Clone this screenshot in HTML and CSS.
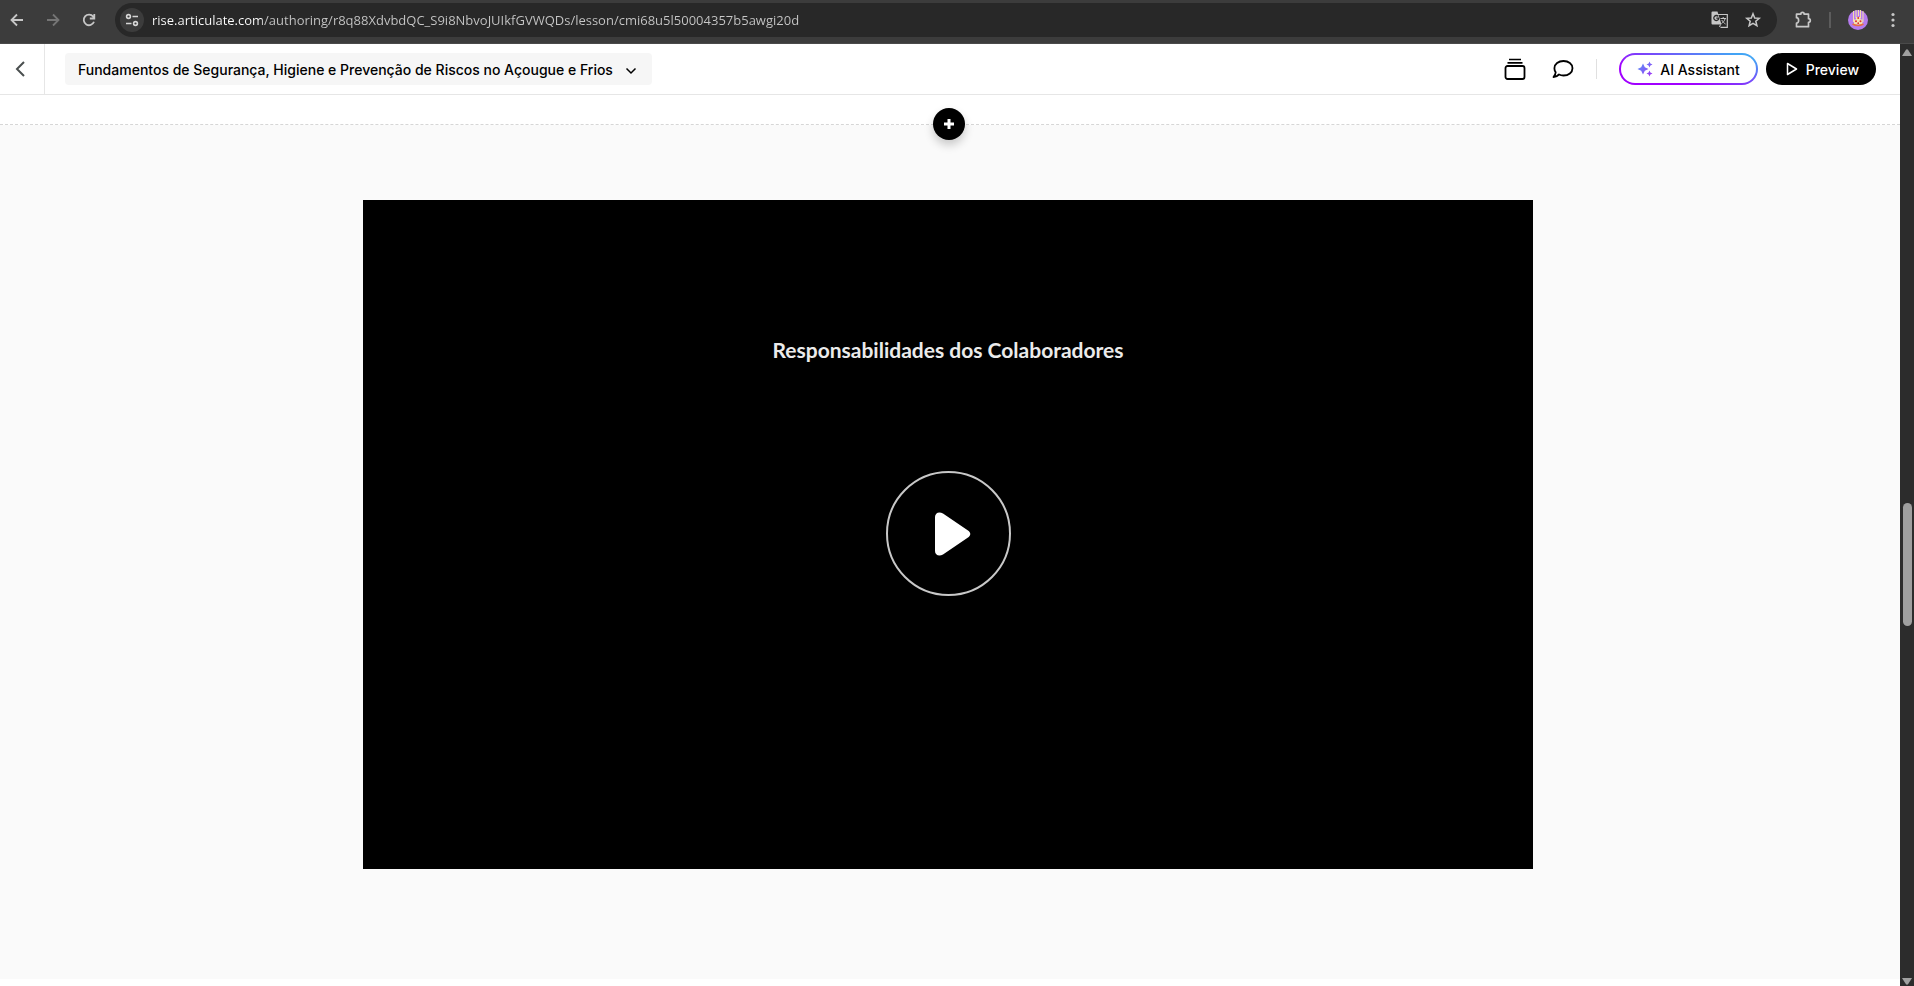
FILE: index.html
```html
<!DOCTYPE html>
<html lang="pt-BR">
<head>
  <meta charset="UTF-8">
  <meta name="viewport" content="width=device-width, initial-scale=1.0">
  <title>Fundamentos de Segurança</title>
  <link rel="stylesheet" href="styles.css">
</head>
<body>
  <!-- browser toolbar -->
  <div class="browser-bar">
    <div class="browser-nav">
      <button class="icon-btn" aria-label="Back">
        <svg width="16" height="16" viewBox="0 0 16 16" fill="none" stroke="#c7c7c7" stroke-width="1.800"><path d="M14 8H3M8 2.500L2.500 8L8 13.500"/></svg>
      </button>
      <button class="icon-btn" aria-label="Forward" disabled>
        <svg width="16" height="16" viewBox="0 0 16 16" fill="none" stroke="#757575" stroke-width="1.800"><path d="M2 8H13M8 2.500L13.500 8L8 13.500"/></svg>
      </button>
      <button class="icon-btn" aria-label="Reload">
        <svg width="16" height="16" viewBox="0 0 16 16" fill="none" stroke="#c7c7c7" stroke-width="1.800"><path d="M13 9.800A5.300 5.300 0 1 1 12.200 4.600L13.300 6M13.300 2V6.500H8.800"/></svg>
      </button>
    </div>
    <form class="url-bar">
      <button type="button" class="site-info" aria-label="Site information">
        <svg width="14" height="14" viewBox="0 0 14 14" fill="none" stroke="#d6d6d6" stroke-width="1.600"><circle cx="3.500" cy="3.500" r="1.900"/><path d="M7.500 3.500H13M1 10.500H6.500"/><circle cx="10.500" cy="10.500" r="1.900"/></svg>
      </button>
      <input type="text" class="url-input" aria-label="Address" spellcheck="false" value="rise.articulate.com/authoring/r8q88XdvbdQC_S9i8NbvoJUIkfGVWQDs/lesson/cmi68u5l50004357b5awgi20d">
      <button type="button" class="icon-btn" aria-label="Translate">
        <svg width="18" height="18" viewBox="0 0 18 18" fill="none"><path d="M7 3.500H16.300V16.300H9.500" stroke="#c7c7c7" stroke-width="1.200"/><path d="M1.500 0.500H6.500L10.500 13.500H1.500A1 1 0 0 1 .5 12.500V1.500A1 1 0 0 1 1.500 .5Z" fill="#c7c7c7"/><path d="M7.200 5.400A2.500 2.500 0 1 0 7.500 8.200V7.200H5.300" stroke="#292929" stroke-width="1.300"/><path d="M9.500 7.500H15M12.200 6V7.500M14.200 7.500C13.500 10 12 11.500 10.500 12.500M10.800 9C11.800 11 13 12 14.500 13M9.500 13.500L8.500 16" stroke="#c7c7c7"/></svg>
      </button>
      <button type="button" class="icon-btn" aria-label="Bookmark">
        <svg width="16" height="16" viewBox="0 0 16 16" fill="none" stroke="#c7c7c7" stroke-width="1.500"><path d="M8 1.800L9.700 6L14.200 6.300L10.800 9.200L11.900 13.700L8 11.300L4.100 13.700L5.200 9.200L1.800 6.300L6.300 6Z"/></svg>
      </button>
    </form>
    <div class="browser-tools">
      <button class="icon-btn" aria-label="Extensions">
        <svg width="18" height="18" viewBox="0 0 18 18" fill="none" stroke="#c7c7c7" stroke-width="1.700" stroke-linejoin="round"><path d="M2.500 3.200H6.800C6.800 .8 10.200 .8 10.200 3.200H14.500V7.700C16.900 7.700 16.900 11.300 14.500 11.300V15.700H2.500V12.200C5.300 12.200 5.300 6.700 2.500 6.700Z"/></svg>
      </button>
      <span class="tools-divider"></span>
      <button class="icon-btn" aria-label="Profile">
        <svg width="20" height="20" viewBox="0 0 20 20"><circle cx="10" cy="10" r="10" fill="#b57bee"/><path d="M5.500 1V12M8 0V8M10.500 0V6M12.500 0V8M15 1V12" stroke="#f3dfa8" stroke-width="1"/><path d="M8 7H12.500V9.500H14.500V14.500H6V9.500H8Z" fill="#f5e3b3"/><path d="M4.500 14Q10 17 15.500 14" stroke="#e8703f" stroke-width="1.500" fill="none"/><g fill="#e02b2b"><circle cx="10.200" cy="8" r=".9"/><circle cx="8" cy="11.300" r="1"/><circle cx="12.500" cy="11.300" r="1"/><circle cx="10.200" cy="13.200" r=".9"/></g></svg>
      </button>
      <button class="icon-btn" aria-label="Menu">
        <svg width="16" height="16" viewBox="0 0 16 16" fill="#c7c7c7"><circle cx="8" cy="2.500" r="1.600"/><circle cx="8" cy="8" r="1.600"/><circle cx="8" cy="13.500" r="1.600"/></svg>
      </button>
    </div>
  </div>

  <div class="window">
    <div class="page">
      <!-- course header -->
      <header class="header">
        <button class="back-btn" aria-label="Voltar">
          <svg width="12" height="18" viewBox="0 0 12 18" fill="none" stroke="#4a4f4f" stroke-width="2"><path d="M10 2L3 9L10 16"/></svg>
        </button>
        <div class="course-menu">
          <select class="course-select" aria-label="Curso">
            <option>Fundamentos de Segurança, Higiene e Prevenção de Riscos no Açougue e Frios</option>
          </select>
          <svg class="course-arrow" width="12" height="8" viewBox="0 0 12 8" fill="none" stroke="#000" stroke-width="1.500"><path d="M1.500 1.500L6 6L10.500 1.500"/></svg>
        </div>
        <div class="header-actions">
          <div class="header-icons">
            <button class="icon-btn" aria-label="Blocks">
              <svg width="22" height="22" viewBox="0 0 22 22" fill="none" stroke="#000" stroke-width="1.800"><rect x="1.500" y="8" width="19" height="13" rx="2"/><path d="M3.500 4.800H18.500M5 1.500H17" stroke-width="1.700"/></svg>
            </button>
            <button class="icon-btn" aria-label="Comments">
              <svg width="22" height="20" viewBox="0 0 22 20" fill="none" stroke="#000" stroke-width="1.800" stroke-linejoin="round"><path d="M11.500 2C16.500 2 20.500 5 20.500 9.200C20.500 13.500 16.500 16.500 11.500 16.500C9.900 16.500 8.400 16.200 7 15.500C5.500 17 3.500 18 1.500 18C2.700 16.700 3.600 15 3.700 13.300C2.900 12.200 2.400 10.800 2.400 9.200C2.400 5 6.500 2 11.500 2Z"/></svg>
            </button>
          </div>
          <span class="header-divider"></span>
          <div class="header-buttons">
            <button class="pill assistant-btn">
              <svg width="14" height="14" viewBox="0 0 14 14"><defs><linearGradient id="spark" x1="0" y1="0" x2="1" y2="1"><stop offset="0" stop-color="#4f9cf7"/><stop offset="1" stop-color="#a42cf5"/></linearGradient></defs><path fill="url(#spark)" d="M5 1.500L6.800 5.200L10.500 7L6.800 8.800L5 12.500L3.200 8.800L-.5 7L3.200 5.200ZM11.500 -.5L12.400 1.600L14.500 2.500L12.400 3.400L11.500 5.500L10.600 3.400L8.500 2.500L10.600 1.600ZM11.500 8.500L12.400 10.600L14.500 11.500L12.400 12.400L11.500 14.500L10.600 12.400L8.500 11.500L10.600 10.600Z"/></svg>
              AI Assistant
            </button>
            <button class="pill preview-btn">
              <svg width="12" height="14" viewBox="0 0 12 14" fill="none" stroke="#fff" stroke-width="1.500" stroke-linejoin="round"><path d="M1.500 1.500L10.500 7L1.500 12.500Z"/></svg>
              Preview
            </button>
          </div>
        </div>
      </header>

      <!-- insert block line -->
      <div class="insert-row">
        <button class="insert-btn" aria-label="Adicionar bloco">
          <svg width="10" height="10" viewBox="0 0 10 10" stroke="#fff" stroke-width="3"><path d="M5 0V10M0 5H10"/></svg>
        </button>
      </div>

      <main class="block">
        <div class="video">
          <h1 class="video-title">Responsabilidades dos Colaboradores</h1>
          <button class="play-btn" aria-label="Play">
            <svg width="36" height="44" viewBox="0 0 36 44" fill="#fff"><path d="M0 5C0 1 4 -1 8 1.500L33 18.500C36 20.500 36 23.500 33 25.500L8 42.500C4 45 0 43 0 39Z"/></svg>
          </button>
        </div>
      </main>
    </div>

    <div class="scrollbar">
      <svg width="10" height="8" viewBox="0 0 10 8" fill="#a0a0a0"><path d="M0 7L3.800 1Q5 -.5 6.200 1L10 7Z"/></svg>
      <div class="scroll-track">
        <div class="scroll-thumb"></div>
      </div>
      <svg width="10" height="8" viewBox="0 0 10 8" fill="#a0a0a0"><path d="M0 1L3.800 7Q5 8.500 6.200 7L10 1Z"/></svg>
    </div>
  </div>
</body>
</html>
```

FILE: styles.css
```css
* {
  box-sizing: border-box;
}
body {
  margin: 0;
  height: 100vh;
  display: flex;
  flex-direction: column;
  background-color: #fff;
  font-family: Inter, "Liberation Sans", sans-serif;
  overflow: hidden;
}
button {
  margin: 0;
  padding: 0;
  border: none;
  background: none;
  font: inherit;
  color: inherit;
}
svg {
  display: block;
  flex: none;
  overflow: visible;
}
.icon-btn {
  display: flex;
  align-items: center;
  justify-content: center;
}

/* browser toolbar */
.browser-bar {
  display: flex;
  align-items: flex-start;
  height: 44px;
  flex: none;
  padding: 3px 13px 0 8px;
  background-color: #3c3c3c;
  border-bottom: 1px solid #4a4a4a;
}
.browser-nav {
  display: flex;
  align-items: center;
  gap: 20px;
  height: 34px;
  padding: 0 18px 0 1px;
}
.url-bar {
  flex: 1;
  display: flex;
  align-items: center;
  height: 34px;
  gap: 16px;
  padding: 0 16px 0 5px;
  border-radius: 17px;
  background-color: #282828;
}
.site-info {
  display: flex;
  align-items: center;
  justify-content: center;
  width: 24px;
  height: 24px;
  border-radius: 50%;
  background-color: #3c3c3c;
}
.url-input {
  flex: 1;
  min-width: 0;
  height: 24px;
  margin-left: -8px;
  padding: 0;
  border: none;
  outline: none;
  /* host is brighter than the path */
  background: linear-gradient(to right, #fff 110px, #c7c7c7 110px);
  background-clip: text;
  -webkit-background-clip: text;
  -webkit-text-fill-color: transparent;
  color: #c7c7c7;
  font: 13px "Open Sans", "Noto Sans", sans-serif;
}
.browser-tools {
  display: flex;
  align-items: center;
  height: 34px;
  gap: 17px;
  padding-left: 17px;
}
.tools-divider {
  width: 2px;
  height: 16px;
  background-color: #5c5c5c;
}

/* page + scrollbar */
.window {
  flex: 1;
  display: flex;
  min-height: 0;
}
.page {
  flex: 1;
  min-width: 0;
}
.scrollbar {
  display: flex;
  flex-direction: column;
  align-items: center;
  width: 14px;
  padding: 5px 0 1px;
  background-color: #2c2c2c;
}
.scroll-track {
  flex: 1;
  display: flex;
  flex-direction: column;
}
.scroll-track::before {
  content: "";
  flex: 56;
}
.scroll-track::after {
  content: "";
  flex: 44;
}
.scroll-thumb {
  width: 9px;
  height: 123px;
  border-radius: 5px;
  background-color: #9f9f9f;
}

/* header */
.header {
  display: flex;
  align-items: center;
  height: 51px;
  border-bottom: 1px solid #e6e6e6;
}
.back-btn {
  display: flex;
  align-items: center;
  justify-content: center;
  align-self: stretch;
  width: 45px;
  padding-right: 4px;
  border-right: 1px solid #e6e6e6;
}
.course-menu {
  position: relative;
  margin-left: 20px;
}
.course-select {
  display: block;
  height: 32px;
  padding: 0 38px 0 13px;
  border: none;
  border-radius: 4px;
  appearance: none;
  background-color: #f6f6f6;
  color: #000;
  font: 500 14px Inter, sans-serif;
}
.course-arrow {
  position: absolute;
  top: 14px;
  right: 15px;
  pointer-events: none;
}
.header-actions {
  display: flex;
  align-items: center;
  gap: 22px;
  margin-left: auto;
  padding-right: 24px;
}
.header-icons {
  display: flex;
  gap: 26px;
}
.header-divider {
  width: 1px;
  height: 20px;
  background-color: #e0e0e0;
}
.header-buttons {
  display: flex;
  gap: 8px;
}
.pill {
  display: flex;
  align-items: center;
  height: 32px;
  gap: 8px;
  border-radius: 16px;
  font-size: 14px;
  font-weight: 500;
}
.assistant-btn {
  padding: 0 16px 0 17px;
  border: 2px solid transparent;
  background:
    linear-gradient(#fff, #fff) padding-box,
    linear-gradient(15deg, #a100ff 30%, #42a5f5 90%) border-box;
}
.preview-btn {
  padding: 0 17px 0 20px;
  background-color: #000;
  color: #fff;
}

/* insert block */
.insert-row {
  position: relative;
  height: 30px;
  border-bottom: 1px dashed #d6d6d6;
}
.insert-btn {
  position: absolute;
  left: 50%;
  bottom: -16px;
  display: flex;
  align-items: center;
  justify-content: center;
  width: 32px;
  height: 32px;
  margin-left: -17px;
  border-radius: 50%;
  background-color: #000;
  box-shadow: 0 5px 10px rgba(0, 0, 0, 0.2);
}

/* video block */
.block {
  display: flex;
  justify-content: center;
  padding: 75px 24px 110px;
  background-color: #fafafa;
}
.video {
  display: flex;
  flex-direction: column;
  align-items: center;
  width: 1170px;
  max-width: 100%;
  height: 669px;
  padding-top: 137px;
  margin-right: 4px;
  background-color: #000;
}
.video-title {
  margin: 0 0 108px;
  color: #ebebeb;
  font: 700 21px/26px Lato, sans-serif;
}
.play-btn {
  display: flex;
  align-items: center;
  justify-content: center;
  width: 125px;
  height: 125px;
  padding-left: 10px;
  border: 2px solid #c8c8c8;
  border-radius: 50%;
}
```
